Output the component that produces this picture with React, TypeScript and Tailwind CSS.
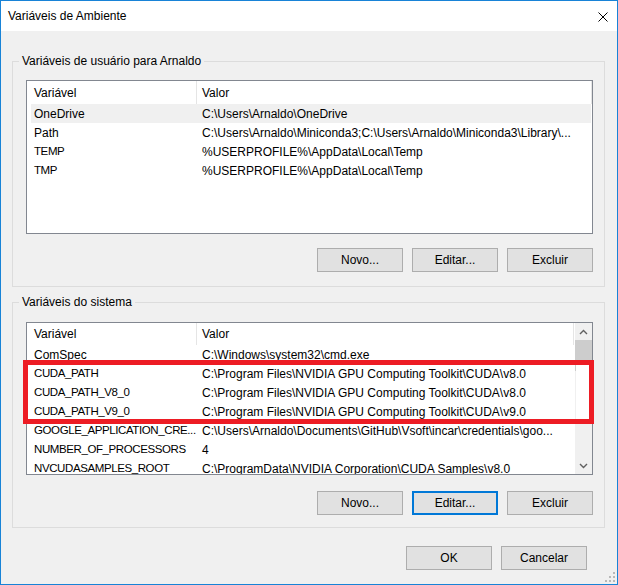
import React from "react";

const userVars: [string, string][] = [
  ["OneDrive", "C:\\Users\\Arnaldo\\OneDrive"],
  ["Path", "C:\\Users\\Arnaldo\\Miniconda3;C:\\Users\\Arnaldo\\Miniconda3\\Library\\..."],
  ["TEMP", "%USERPROFILE%\\AppData\\Local\\Temp"],
  ["TMP", "%USERPROFILE%\\AppData\\Local\\Temp"],
];

const sysVars: [string, string][] = [
  ["ComSpec", "C:\\Windows\\system32\\cmd.exe"],
  ["CUDA_PATH", "C:\\Program Files\\NVIDIA GPU Computing Toolkit\\CUDA\\v8.0"],
  ["CUDA_PATH_V8_0", "C:\\Program Files\\NVIDIA GPU Computing Toolkit\\CUDA\\v8.0"],
  ["CUDA_PATH_V9_0", "C:\\Program Files\\NVIDIA GPU Computing Toolkit\\CUDA\\v9.0"],
  ["GOOGLE_APPLICATION_CRE...", "C:\\Users\\Arnaldo\\Documents\\GitHub\\Vsoft\\incar\\credentials\\goo..."],
  ["NUMBER_OF_PROCESSORS", "4"],
  ["NVCUDASAMPLES_ROOT", "C:\\ProgramData\\NVIDIA Corporation\\CUDA Samples\\v8.0"],
];

function Btn({ label, focused }: { label: string; focused?: boolean }) {
  return (
    <div
      className={
        focused
          ? "w-[86px] h-[24px] bg-[#e1e1e1] border-2 border-[#0078d7] flex items-center justify-center"
          : "w-[86px] h-[24px] bg-[#e1e1e1] border border-[#adadad] flex items-center justify-center"
      }
    >
      {label}
    </div>
  );
}

function Group({ label, children, className }: { label: string; children: React.ReactNode; className: string }) {
  return (
    <div className={className}>
      <div className="-mt-[9px] -ml-[7px] px-[3px] w-fit bg-[#f0f0f0] leading-[16px] whitespace-nowrap">{label}</div>
      {children}
    </div>
  );
}

function Header({ h, right }: { h: string; right?: boolean }) {
  return (
    <div className={h + " flex bg-white shrink-0"}>
      <div className="w-[170px] pl-[7px] border-r border-[#e5e5e5] flex items-center">Variável</div>
      <div className={right ? "flex-1 pl-[5px] border-r border-[#e5e5e5] flex items-center" : "flex-1 pl-[5px] flex items-center"}>
        Valor
      </div>
    </div>
  );
}

function Row({ name, value, selected }: { name: string; value: string; selected?: boolean }) {
  const caps = name === name.toUpperCase();
  return (
    <div
      className={
        selected
          ? "h-[19px] ml-[4px] mr-[1px] flex items-center bg-[#f0f0f0] shrink-0"
          : "h-[19px] ml-[4px] mr-[1px] flex items-center shrink-0"
      }
    >
      <div
        className={
          caps
            ? "w-[166px] pl-[3px] whitespace-nowrap overflow-hidden shrink-0 text-[11.5px] tracking-[-0.4px]"
            : "w-[166px] pl-[3px] whitespace-nowrap overflow-hidden shrink-0"
        }
      >
        {name}
      </div>
      <div className="flex-1 pl-[5px] whitespace-nowrap overflow-hidden">{value}</div>
    </div>
  );
}

export default function App() {
  return (
    <div className="relative w-[618px] h-[585px] border border-[#1883d7] bg-[#f0f0f0] flex flex-col font-['Liberation_Sans',Arial,sans-serif] text-[12px] text-black overflow-hidden">
      {/* Title bar */}
      <div className="h-[30px] bg-white flex items-center justify-between pl-[7px] pr-[9px] shrink-0">
        <span>Variáveis de Ambiente</span>
        <svg width="10" height="10" viewBox="0 0 10 10" className="mt-[1px]">
          <path d="M0.5 0.5 L9.5 9.5 M9.5 0.5 L0.5 9.5" stroke="#000" strokeWidth="1" fill="none" />
        </svg>
      </div>

      <div className="flex flex-col pl-[11px] pr-[12px]">
        {/* User variables */}
        <Group label="Variáveis de usuário para Arnaldo" className="mt-[30px] border border-[#dcdcdc] pl-[13px] pr-[11px] pb-[14px] flex flex-col">
          <div className="mt-[11px] h-[154px] border border-[#828790] bg-white flex flex-col">
            <Header h="h-[23px]" right />
            {userVars.map(([n, v], i) => (
              <Row key={n} name={n} value={v} selected={i === 0} />
            ))}
          </div>
          <div className="mt-[14px] flex justify-end gap-[9px]">
            <Btn label="Novo..." />
            <Btn label="Editar..." />
            <Btn label="Excluir" />
          </div>
        </Group>

        {/* System variables */}
        <Group label="Variáveis do sistema" className="mt-[15px] border border-[#dcdcdc] pl-[13px] pr-[11px] pb-[12px] flex flex-col">
          <div className="mt-[12px] h-[153px] border border-[#828790] bg-white flex">
            <div className="flex-1 flex flex-col overflow-hidden">
              <div className="mr-[1px] flex flex-col">
                <Header h="h-[22px]" right />
              </div>
              {sysVars.map(([n, v]) => (
                <Row key={n} name={n} value={v} />
              ))}
            </div>
            <div className="w-[17px] bg-[#f0f0f0] flex flex-col shrink-0">
              <div className="h-[17px] flex items-center justify-center">
                <svg width="9" height="6" viewBox="0 0 9 6">
                  <path d="M1 5 L4.5 1.5 L8 5" stroke="#606060" strokeWidth="1.4" fill="none" />
                </svg>
              </div>
              <div className="h-[31px] bg-[#cdcdcd]" />
              <div className="flex-1" />
              <div className="h-[17px] flex items-center justify-center">
                <svg width="9" height="6" viewBox="0 0 9 6">
                  <path d="M1 1 L4.5 4.5 L8 1" stroke="#606060" strokeWidth="1.4" fill="none" />
                </svg>
              </div>
            </div>
          </div>
          <div className="mt-[16px] flex justify-end gap-[9px]">
            <Btn label="Novo..." />
            <Btn label="Editar..." focused />
            <Btn label="Excluir" />
          </div>
        </Group>

        {/* OK / Cancel */}
        <div className="mt-[18px] pr-[18px] flex justify-end gap-[9px]">
          <Btn label="OK" />
          <Btn label="Cancelar" />
        </div>
      </div>

      {/* Red highlight overlay */}
      <div className="absolute left-[22px] top-[359px] w-[571px] h-[64px] border-[5px] border-[#ed1c24] flex justify-end">
        <div className="w-[13px] h-full bg-white" />
      </div>

      {/* Resize grip */}
      <svg className="absolute right-[2px] bottom-[2px]" width="10" height="10" viewBox="0 0 10 10">
        <rect x="8" y="0" width="2" height="2" fill="#b8b8b8" />
        <rect x="4" y="4" width="2" height="2" fill="#b8b8b8" />
        <rect x="8" y="4" width="2" height="2" fill="#b8b8b8" />
        <rect x="0" y="8" width="2" height="2" fill="#b8b8b8" />
        <rect x="4" y="8" width="2" height="2" fill="#b8b8b8" />
        <rect x="8" y="8" width="2" height="2" fill="#b8b8b8" />
      </svg>
    </div>
  );
}
